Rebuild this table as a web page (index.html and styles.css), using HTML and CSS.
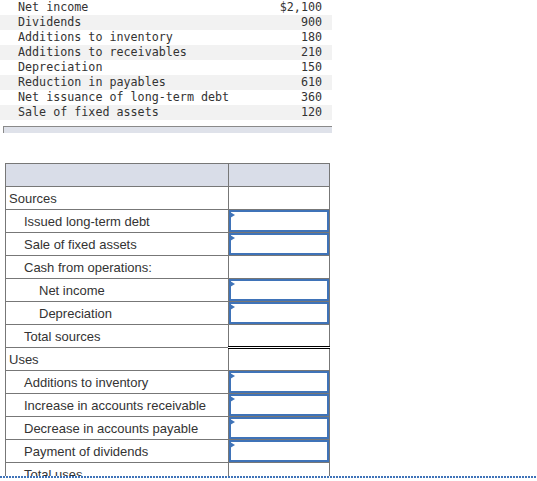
FILE: index.html
```html
<!DOCTYPE html>
<html>
<head>
<meta charset="utf-8">
<link rel="stylesheet" href="styles.css">
</head>
<body>
<div class="page">
  <table class="data">
    <tr><td>Net income</td><td class="num">$2,100</td></tr>
    <tr><td>Dividends</td><td class="num">900</td></tr>
    <tr><td>Additions to inventory</td><td class="num">180</td></tr>
    <tr><td>Additions to receivables</td><td class="num">210</td></tr>
    <tr><td>Depreciation</td><td class="num">150</td></tr>
    <tr><td>Reduction in payables</td><td class="num">610</td></tr>
    <tr><td>Net issuance of long-term debt</td><td class="num">360</td></tr>
    <tr><td>Sale of fixed assets</td><td class="num">120</td></tr>
  </table>
  <div class="bar"></div>

  <table class="sheet">
    <colgroup><col class="c1"><col class="c2"></colgroup>
    <tr class="head"><td></td><td></td></tr>
    <tr><td class="label">Sources</td><td></td></tr>
    <tr><td class="label l1">Issued long-term debt</td><td class="val"><div class="inp"><span class="flag"></span></div></td></tr>
    <tr><td class="label l1">Sale of fixed assets</td><td class="val"><div class="inp"><span class="flag"></span></div></td></tr>
    <tr><td class="label l1">Cash from operations:</td><td></td></tr>
    <tr><td class="label l2">Net income</td><td class="val"><div class="inp"><span class="flag"></span></div></td></tr>
    <tr><td class="label l2">Depreciation</td><td class="val"><div class="inp"><span class="flag"></span></div></td></tr>
    <tr><td class="label l1">Total sources</td><td class="total dbl"></td></tr>
    <tr><td class="label">Uses</td><td></td></tr>
    <tr><td class="label l1">Additions to inventory</td><td class="val"><div class="inp"><span class="flag"></span></div></td></tr>
    <tr><td class="label l1">Increase in accounts receivable</td><td class="val"><div class="inp"><span class="flag"></span></div></td></tr>
    <tr><td class="label l1">Decrease in accounts payable</td><td class="val"><div class="inp"><span class="flag"></span></div></td></tr>
    <tr><td class="label l1">Payment of dividends</td><td class="val"><div class="inp"><span class="flag"></span></div></td></tr>
    <tr><td class="label l1">Total uses</td><td class="total"></td></tr>
  </table>
</div>
<div class="dots"></div>
</body>
</html>
```
FILE: styles.css
```css
html, body {
  margin: 0;
  padding: 0;
  background: #fff;
}
.page {
  height: 476px;
  overflow: hidden;
}
.data {
  width: 332px;
  border-collapse: collapse;
  font-family: "DejaVu Sans Mono", "Liberation Mono", monospace;
  font-size: 11.7px;
  color: #333;
}
.data td {
  height: 15px;
  line-height: 15px;
  padding: 0 0 0 18px;
  white-space: pre;
}
.data td.num {
  text-align: right;
  padding: 0 10px 0 0;
}
.data tr:nth-child(even) td {
  background: #f2f2f2;
}
.bar {
  margin: 6px 0 0 3px;
  width: 328px;
  height: 6px;
  border-top: 1px solid #8a8a8a;
  border-left: 1px solid #8a8a8a;
  background: #dfe2ea;
}
.sheet {
  margin: 30px 0 0 5px;
  width: 324px;
  table-layout: fixed;
  border-collapse: collapse;
  font-family: "Liberation Sans", Arial, sans-serif;
  font-size: 13px;
  color: #333;
}
.sheet col.c1 {
  width: 223px;
}
.sheet col.c2 {
  width: 101px;
}
.sheet tr {
  height: 23px;
}
.sheet td {
  border: 1px solid #777;
  padding: 0;
}
.sheet .head td {
  background: #d9dde8;
}
.sheet td.label {
  padding-left: 3px;
  white-space: nowrap;
}
.sheet td.l1 {
  padding-left: 18px;
}
.sheet td.l2 {
  padding-left: 33px;
}
.inp {
  position: relative;
  box-sizing: border-box;
  height: 22px;
  width: 100%;
  border: 2px solid #3f73b8;
  background: #fff;
}
.flag {
  position: absolute;
  left: -1px;
  top: 0;
  width: 0;
  height: 0;
  border-left: 5px solid #3f73b8;
  border-top: 3px solid transparent;
  border-bottom: 3px solid transparent;
}
.sheet td.total {
  border-top: 1px solid #000;
}
.sheet td.dbl {
  border-bottom: 3px double #000;
}
.dots {
  height: 2px;
  width: 537px;
  background: repeating-linear-gradient(to right, #3f73b8 0 2px, transparent 2px 3px);
}
```
